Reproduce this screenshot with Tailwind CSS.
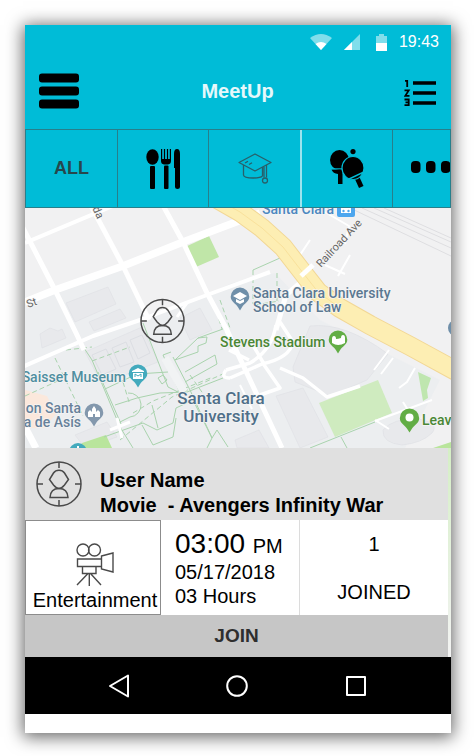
<!DOCTYPE html>
<html lang="en">

<head>
  <meta charset="UTF-8">
  <meta name="viewport" content="width=device-width, initial-scale=1.0">
  <title>MeetUp</title>
  <script src="https://cdn.jsdelivr.net/npm/@tailwindcss/browser@4"></script>
</head>

<body class="bg-white pt-[25px] pr-[23px] pb-6 pl-[25px] font-['Liberation_Sans',Arial,sans-serif] text-black">

  <!-- shared icons -->
  <svg class="hidden">
    <symbol id="target-user" viewBox="0 0 46 46">
      <g fill="none" stroke="#4a4a4a" stroke-width="1.5">
        <circle cx="23" cy="23" r="22" />
        <path d="M23 1v6M23 39v6M1 23h6M39 23h6" />
        <path d="M17.500 12C20 8.300 26 8.300 28.500 12L32.500 18.500L28.500 24Q25.500 27.500 23 27.500Q20.500 27.500 17.500 24L13.500 18.500z" />
        <path d="M14 36.500q.5-9 9-9t9 9z" />
      </g>
    </symbol>
    <symbol id="pin" viewBox="0 0 20 24">
      <path d="M10 .5a9.300 9.300 0 0 1 9.300 9.300c0 5-5.500 7-7.300 10.500L10 23.500l-2-3.200C6.200 16.800.7 14.800.7 9.800A9.300 9.300 0 0 1 10 .5z" />
    </symbol>
  </svg>

  <div class="flex flex-col bg-white shadow-[0_2px_16px_2px_rgba(0,0,0,0.6)]">

    <header class="bg-[#00bcd7]">
      <div class="flex h-[34px] items-center justify-end pr-3 text-white">
        <svg class="mr-3 h-4 w-[22px]" viewBox="0 0 22 16">
          <path d="M11 16L0 4Q11-4 22 4z" fill="#80deeb" />
          <path d="M11 16L5.500 10Q11 6 16.500 10z" fill="#fff" />
        </svg>
        <svg class="mr-4 h-4 w-4" viewBox="0 0 16 16">
          <path d="M0 16L16 0V16z" fill="#80deeb" />
          <path d="M0 16L8 8V16z" fill="#fff" />
        </svg>
        <svg class="mr-3 h-[17px] w-[11px]" viewBox="0 0 11 17">
          <path d="M0 2h3V0h5v2h3v15H0z" fill="#80deeb" />
          <path d="M0 9h11v8H0z" fill="#fff" />
        </svg>
        <span class="text-[16px]">19:43</span>
      </div>

      <div class="grid h-[70px] grid-cols-[1fr_auto_1fr] items-center pr-[15px] pb-[6px] pl-[14px]">
        <button type="button" aria-label="Menu" class="justify-self-start">
          <svg class="h-9 w-10" viewBox="0 0 40 36">
            <rect y="0.500" width="40" height="9" rx="3" />
            <rect y="13.500" width="40" height="9" rx="3" />
            <rect y="26.500" width="40" height="9" rx="3" />
          </svg>
        </button>
        <h1 class="text-[20px] font-bold text-[#e6f8fb]">MeetUp</h1>
        <button type="button" aria-label="List" class="justify-self-end pt-1">
          <svg class="h-7 w-8" viewBox="0 0 32 28" fill="none" stroke="#000" stroke-width="1.800">
            <path d="M9 4h23M9 14h23M9 24h23" stroke-width="3.500" />
            <path d="M1 1.900h2.200V8M.5 11.400h4.200L1.300 16.800h4.200M.5 20.500h4.200v5.700H.5M1.500 23.300h3" />
          </svg>
        </button>
      </div>

      <nav class="flex h-[79px] overflow-hidden border border-[#287f8b]">
        <button type="button" class="w-[91px] shrink-0 text-[18px] font-bold text-[#26474c]">ALL</button>
        <button type="button" aria-label="Food" class="flex w-[91px] shrink-0 items-center justify-center border-l border-[#287f8b]">
          <svg class="h-10 w-[34px]" viewBox="0 0 34 40">
            <ellipse cx="6.500" cy="8" rx="6.200" ry="7.700" />
            <rect x="4" y="17" width="5" height="23" rx="1" />
            <path d="M15 0h1.200v10h1.700V0h1.200v10h1.800V0h1.200v10h1.700V0H25v12q0 3-3 3.500h-4q-3-.5-3-3.500z" />
            <rect x="18" y="16.500" width="4.500" height="23.500" rx="1" />
            <path d="M28 19V5q0-5 3-5t3 5v33q0 2-2.500 2T29 38V19z" />
          </svg>
        </button>
        <button type="button" aria-label="Education" class="flex w-[92px] shrink-0 items-center justify-center border-l border-[#287f8b]">
          <svg class="h-[31px] w-[34px]" viewBox="0 0 34 31" fill="none" stroke="#285f69" stroke-width="1.300" stroke-linejoin="round">
            <path d="M17 1L33 9.500L17 18L1 9.500z" />
            <path d="M5.500 12v10q0 3 10 3q7 0 9-2M24.500 14v9M28.500 12v12.500M26 13.500v11" />
            <path d="M7 10l3-1.800M11 11.500l3-1.800" />
            <circle cx="27" cy="27.500" r="2.500" />
          </svg>
        </button>
        <button type="button" aria-label="Sports" class="flex w-[92px] shrink-0 items-center justify-center border-l-2 border-[#9ce4ee]">
          <svg class="h-10 w-[34px]" viewBox="0 0 34 40">
            <ellipse cx="9.500" cy="11" rx="9.500" ry="10" />
            <path d="M1.500 20.500h13v3.500h-2v11H8V25q-5-.5-6.500-4.500z" />
            <path d="M0 19.800h15" stroke="#00bcd7" />
            <path d="M24 28l4.500-2 5 11-4.500 2z" />
            <ellipse cx="23" cy="19" rx="11" ry="11.500" stroke="#00bcd7" stroke-width="1.200" />
            <path d="M18 30.500L34 23" stroke="#00bcd7" stroke-width="1.500" />
            <circle cx="23" cy="2.600" r="2.600" />
          </svg>
        </button>
        <button type="button" aria-label="More" class="flex w-[92px] shrink-0 items-center border-l border-[#287f8b] pb-1 pl-[18px]">
          <svg class="h-3 w-10" viewBox="0 0 40 12">
            <rect width="9.500" height="12" rx="4" />
            <rect x="15" width="9.500" height="12" rx="4" />
            <rect x="30" width="9.500" height="12" rx="4" />
          </svg>
        </button>
      </nav>
    </header>

    <main>
      <svg class="block h-[240px] w-full font-['Roboto',sans-serif]" viewBox="25 208 426 240" preserveAspectRatio="xMidYMid slice" role="img" aria-label="Map of Santa Clara University">
        <rect x="-400" y="208" width="1300" height="240" fill="#f1f1f2" />

        <!-- campus and blocks -->
        <path d="M25 302L123 264L150 317L208 294L232 283L275 273L320 320L440 380L405 448H25z" fill="#eceef0" />
        <g fill="#e8e9ec" stroke="#dfe1e5" stroke-width=".7">
          <path d="M66 303L108 287L116 304L75 322z" />
          <path d="M89 322L120 309L126 318L94 331z" />
          <path d="M40 334l10-6 8 3 4-2 4 9-24 10z" />
          <path d="M85 352L142 327L158 362L102 384z" />
          <path d="M180 318l20-10 12 22-22 10z" />
          <path d="M293 367L310 326Q345 322 388 354L367 380L330 396L295 382z" />
          <path d="M276 396L303 388L328 437L300 448z" />
          <path d="M75 435l32-13 10 15-32 11z" />
          <path d="M383 430q10-12 35-11q22 4 14 14q-10 10-30 12q-20-2-19-15z" />
          <path d="M235 440l24-10 10 18h-32z" />
        </g>
        <g fill="none" stroke="#dcdee3">
          <path d="M92 355l14-6 10 20-14 6zM112 348l14-6 8 20-14 5zM130 340l12-5 8 18-12 6z" />
        </g>
        <path d="M25 390l22 6 9 18-12 14H25z" fill="#fbe8dc" />

        <!-- green areas -->
        <path d="M185 247L209 236L219 257L196 267z" fill="#c0e6a8" />
        <path d="M319 403L378 380L392 413L335 437z" fill="#cfebbf" />
        <path d="M418 372L431 378L427 390L428 398L423 401z" fill="#bfe6af" />
        <path d="M82 443l24-8 6 13H80zM433 448l18-6v6z" fill="#b9e59c" />

        <!-- footpaths -->
        <g fill="none" stroke="#a9d3ad">
          <path d="M82 345L92 360L120 427L133 448M98 372L122 426M143 323L168 387L180 393M163 355L180 393M173 357L190 390L212 438M163 355l8-3" />
          <path d="M175 360L198 338L207 337L206 343L198 346V352zM198 338L223 329M185 372L215 355L217 364L185 382" />
          <path d="M105 389L137 374L168 372M115 405L137 398L160 393L187 392L223 378M128 393a12 12 0 0 1 2 24l-12 6" />
          <path d="M104 437L143 423L157 430L173 423L176 408L193 400M142 425L153 445L173 437L176 418M193 400L212 438L217 430L228 447M212 438L207 448M152 405L158 428M158 378l5-3 4 5-5 4z" />
          <path d="M310 448L375 422M341 437l6 11M253 270L280 258" />
        </g>
        <g fill="none" stroke="#a9d3ad" stroke-dasharray="5 3">
          <path d="M55 358L83 416M25 396L60 380M92 361L130 347M66 350L92 347M120 440L172 397L225 373M123 382l6 20M133 413l20-12 60-24M190 375l14 20" />
          <path d="M214 304L222 329M220 300l10 28M253 270v34M255 305l24-4M277 273v28" />
        </g>

        <!-- streets -->
        <g fill="none" stroke="#fff" stroke-linejoin="round">
          <path d="M25 302L55 290L123 266L183 242L260 213" stroke-width="7.500" />
          <path d="M25 243L115 205" stroke-width="4" />
          <path d="M20 222L55 290L77 335L84 350" stroke-width="5" />
          <path d="M90 204L123 266L149 320" stroke-width="5" />
          <path d="M160 200L183 242L207 293L227 330L236 350L282 448" stroke-width="5" />
          <path d="M20 368L93 336L140 320L207 295L270 272" stroke-width="4" />
          <path d="M25 427L36 448" stroke-width="7" />
          <path d="M165 358L184 392" stroke="#f1f3f4" stroke-width="8" />
          <path d="M117 418l5 20M110 430l20-8" stroke-width="3" />
          <path d="M313 272L286 295L276 330" stroke-width="5" />
          <path d="M226 370L250 363Q272 350 276 325M230 378L262 364Q290 358 293 342L280 322M226 370q-6 8 4 8M262 362L280 388L260 395M280 368L303 378L327 397L360 386M229 350l20 10M226 330l8 20M250 340l14 24" stroke-width="3.500" />
          <path d="M325 265L345 274M338 276L350 255M310 240l-20 30M325 212l24 14-4 18M389 350l-15 20M393 358l-12 16M415 368l-8 14-8 6M375 421L432 400M403 402l5 8M375 420l14 9M240 385l12 24" stroke-width="2" />
          <path d="M187 303l-10 14" stroke-width="3" />
        </g>

        <!-- rail lines -->
        <g fill="none" stroke="#dedee1">
          <path d="M350 208L451 256M362 208L451 248M374 208L451 242M384 208L451 238" />
        </g>

        <!-- El Camino Real -->
        <path d="M205 192L240 212L262 228L283 247L300 269L318 292L340 308L370 325L410 346L465 376" fill="none" stroke="#f2d795" stroke-width="20" />
        <path d="M205 192L240 212L262 228L283 247L300 269L318 292L340 308L370 325L410 346L465 376" fill="none" stroke="#fdeeb3" stroke-width="18" />
        <path d="M205 192L240 212L262 228L283 247L300 269L318 292L340 308" fill="none" stroke="#f7dd96" stroke-width=".8" />
        <path d="M313 265L301 276" stroke="#fff" stroke-width="5" />

        <!-- labels -->
        <g stroke="#f5f5f5" stroke-width="1.500" stroke-linejoin="round" paint-order="stroke" font-size="14" font-weight="500">
          <text x="262" y="214" fill="#4b87c0">Santa Clara</text>
          <text x="253" y="298" fill="#5b7891">Santa Clara University</text>
          <text x="253" y="312" fill="#5b7891">School of Law</text>
          <text x="220" y="347" fill="#4a8735">Stevens Stadium</text>
          <text x="126" y="382" text-anchor="end" fill="#4e8ea0">Saisset Museum</text>
          <text x="81" y="413" text-anchor="end" fill="#67819a">on Santa</text>
          <text x="81" y="427" text-anchor="end" fill="#67819a">a de Asís</text>
          <text x="422" y="425" fill="#4a8735">Leav</text>
          <g font-size="17" fill="#4f6f89" text-anchor="middle">
            <text x="221" y="404">Santa Clara</text>
            <text x="221" y="422">University</text>
          </g>
          <g font-size="11" font-weight="400" fill="#666">
            <text transform="translate(321 268) rotate(-47)">Railroad Ave</text>
            <text transform="translate(90 203) rotate(66)">eda</text>
            <text x="28" y="308" transform="rotate(-20 28 308)">St</text>
          </g>
        </g>

        <!-- pins -->
        <rect x="337" y="203" width="18" height="14" rx="2" fill="#4da6ee" />
        <path d="M341 203h10v10h-10z" fill="#fff" />
        <circle cx="343.500" cy="211" r="1.200" fill="#4da6ee" />
        <circle cx="348.500" cy="211" r="1.200" fill="#4da6ee" />
        <use href="#pin" x="230" y="287" width="20" height="24" fill="#6f8fa9" />
        <path d="M233 296l7-4 7 4-7 4zM236 299v3l4 2 4-2v-3l-4 2z" fill="#fff" />
        <use href="#pin" x="328" y="330" width="20" height="24" fill="#62ad45" />
        <path d="M332 339q0-3 2-3t2 3q2 0 5-1q0-3 2-3t2 3v5q-7 4-13 0z" fill="#fff" />
        <use href="#pin" x="128" y="364" width="20" height="24" fill="#43aabd" />
        <path d="M132 371l6-3 6 3v1h-12zM133 373h10v6h-10z" fill="#fff" />
        <path d="M135 377v-3l3 2 3-2v3" fill="none" stroke="#43aabd" />
        <use href="#pin" x="84" y="403" width="20" height="24" fill="#8398ad" />
        <path d="M88 417v-5l2-2 2 2v-3l2-3 2 3v3l2-2 2 2v5h-5v-3h-2v3z" fill="#fff" />
        <use href="#pin" x="399" y="408" width="21" height="25" fill="#62ad45" />
        <circle cx="409.500" cy="417.500" r="4" fill="#fff" />
        <circle cx="78" cy="452" r="9" fill="#43aabd" />
        <path d="M78 446v3" stroke="#fff" stroke-width="2" />
        <circle cx="456" cy="328" r="8" fill="#6f8fa9" />

        <use href="#target-user" x="140" y="298" width="45" height="46" />
      </svg>

      <section class="bg-gradient-to-b from-[#d5efc5] to-[#f3f3f3] pr-[3px]">
        <div class="flex h-[72px] items-center gap-[18px] bg-[#e0e0e0] pl-[11px]">
          <svg class="h-[46px] w-[46px] shrink-0">
            <use href="#target-user" />
          </svg>
          <div class="pt-[18px] text-[20px] leading-[25px] font-bold">
            <p>User Name</p>
            <p class="whitespace-pre">Movie  - Avengers Infinity War</p>
          </div>
        </div>

        <div class="grid h-[95px] grid-cols-[136px_139px_1fr] bg-white text-[20px]">
          <div class="flex flex-col items-center justify-end border border-[#8c8c8c] pb-[2px] pl-1">
            <svg class="h-[43px] w-[38px]" viewBox="0 0 38 43" fill="none" stroke="#4a4a4a" stroke-width="1.400">
              <circle cx="7" cy="7" r="6" />
              <circle cx="18.500" cy="7" r="6" />
              <path d="M1.500 16h24v7.500h-24zM25.500 13L37 10v19l-11.500-3zM6.500 23.500h13.500v7H6.500zM13.300 30.500V43M12 30.500L1 42M14.500 30.500L25 42" />
            </svg>
            <p class="mt-[2px] leading-6">Entertainment</p>
          </div>
          <div class="border-r border-[#dcdcdc] pt-[10px] pl-[14px]">
            <p class="leading-7"><span class="text-[28px]">03:00</span> <span class="ml-[2px] text-[20px]">PM</span></p>
            <p class="leading-6">05/17/2018</p>
            <p class="leading-6">03 Hours</p>
          </div>
          <div class="flex flex-col items-center justify-between pt-3 pb-[11px] leading-6">
            <p>1</p>
            <p>JOINED</p>
          </div>
        </div>

        <button type="button" class="block h-[42px] w-full bg-[#c6c6c6] text-[19px] font-bold text-[#2e2e2e]">JOIN</button>
      </section>
    </main>

    <footer class="mb-[19px] flex h-[57px] items-center justify-between bg-black px-[83px]">
      <button type="button" aria-label="Back">
        <svg class="h-6 w-[22px]" viewBox="0 0 22 24" fill="none" stroke="#fff" stroke-width="2" stroke-linejoin="round">
          <path d="M20 1.500v21L2 12z" />
        </svg>
      </button>
      <button type="button" aria-label="Home">
        <svg class="h-6 w-6" viewBox="0 0 24 24" fill="none" stroke="#fff" stroke-width="2">
          <circle cx="12" cy="12" r="9.800" />
        </svg>
      </button>
      <button type="button" aria-label="Recent apps">
        <svg class="h-6 w-6" viewBox="0 0 24 24" fill="none" stroke="#fff" stroke-width="2" stroke-linejoin="round">
          <rect x="3" y="3" width="18" height="18" />
        </svg>
      </button>
    </footer>
  </div>

</body>

</html>
